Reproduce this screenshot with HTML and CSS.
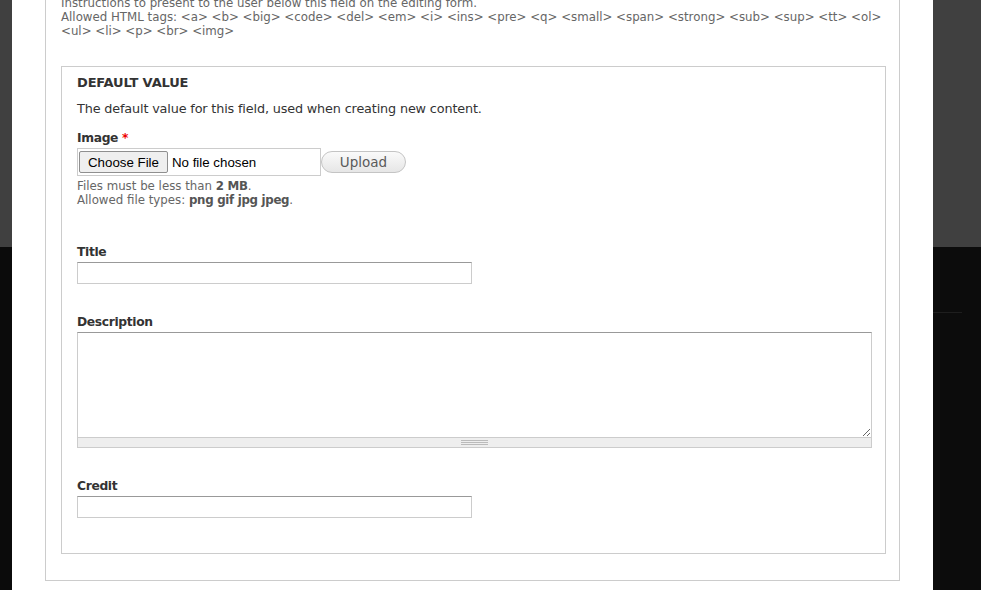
FILE: index.html
```html
<!DOCTYPE html>
<html lang="en">
<head>
<meta charset="utf-8">
<title>Default value</title>
<link rel="stylesheet" href="styles.css">
</head>
<body>
<div class="page">
  <div class="strip strip-left"></div>
  <main class="main">
    <div class="outer">
      <div class="desc desc-top">Instructions to present to the user below this field on the editing form.<br>Allowed HTML tags: &lt;a&gt; &lt;b&gt; &lt;big&gt; &lt;code&gt; &lt;del&gt; &lt;em&gt; &lt;i&gt; &lt;ins&gt; &lt;pre&gt; &lt;q&gt; &lt;small&gt; &lt;span&gt; &lt;strong&gt; &lt;sub&gt; &lt;sup&gt; &lt;tt&gt; &lt;ol&gt;<br>&lt;ul&gt; &lt;li&gt; &lt;p&gt; &lt;br&gt; &lt;img&gt;</div>
      <section class="inner">
        <div class="legend">DEFAULT VALUE</div>
        <p class="intro">The default value for this field, used when creating new content.</p>

        <div class="item item-image">
          <label class="label">Image <span class="req">*</span></label>
          <div class="file-row">
            <input class="file" type="file">
            <button class="upload" type="button">Upload</button>
          </div>
          <div class="desc">Files must be less than <strong>2 MB</strong>.<br>Allowed file types: <strong>png gif jpg jpeg</strong>.</div>
        </div>

        <div class="item item-title">
          <label class="label">Title</label>
          <input class="text" type="text">
        </div>

        <div class="item item-desc">
          <label class="label">Description</label>
          <textarea class="area"></textarea>
          <div class="grippie"><span class="grip"></span></div>
        </div>

        <div class="item item-credit">
          <label class="label">Credit</label>
          <input class="text" type="text">
        </div>
      </section>
    </div>
  </main>
  <div class="strip strip-right">
    <div class="strip-top"></div>
    <div class="strip-bottom"><span class="strip-line"></span></div>
  </div>
</div>
</body>
</html>
```
FILE: styles.css
```css
html, body {
  margin: 0;
  padding: 0;
  height: 100%;
  overflow: hidden;
}
body {
  font-family: "DejaVu Sans", Verdana, sans-serif;
  color: #333;
  background: #0b0b0b;
}
.page {
  display: flex;
  height: 590px;
}
.strip {
  flex: none;
}
.strip-left {
  width: 12px;
  background: linear-gradient(to bottom, #404040 0, #404040 247px, #0b0b0b 247px);
}
.strip-right {
  width: 48px;
  display: flex;
  flex-direction: column;
}
.strip-top {
  height: 247px;
  background: #404040;
}
.strip-bottom {
  flex: 1;
  background: #0c0c0c;
  padding-top: 65px;
}
.strip-line {
  display: block;
  width: 29px;
  height: 1px;
  background: #1e1e1e;
}
.main {
  width: 921px;
  background: #fff;
  padding-left: 33px;
  box-sizing: border-box;
}
.outer {
  width: 855px;
  box-sizing: border-box;
  border: 1px solid #ccc;
  border-top: none;
  padding: 0 15px 26px 15px;
}
.desc {
  font-size: 11.8px;
  line-height: 14px;
  color: #666;
}
.desc strong {
  color: #555;
  letter-spacing: -0.3px;
}
.desc-top {
  margin-top: -4px;
}
.inner {
  margin-top: 28px;
  width: 825px;
  box-sizing: border-box;
  border: 1px solid #ccc;
  padding: 8px 15px 35px 15px;
}
.legend {
  font-size: 13px;
  line-height: 16px;
  font-weight: bold;
  letter-spacing: -0.15px;
  text-transform: uppercase;
}
.intro {
  margin: 10px 0 0;
  font-size: 12.8px;
  letter-spacing: -0.15px;
  line-height: 16px;
}
.label {
  display: block;
  font-size: 12.3px;
  letter-spacing: -0.35px;
  line-height: 16px;
  font-weight: bold;
  padding-top: 1px;
  margin-bottom: 2px;
}
.req {
  color: #e00;
}
.item-image { margin-top: 12px; }
.item-title { margin-top: 36px; }
.item-desc { margin-top: 29px; }
.item-credit { margin-top: 29px; }
.file-row {
  display: flex;
  align-items: center;
}
.file {
  box-sizing: border-box;
  width: 244px;
  height: 28px;
  border: 1px solid #ccc;
  padding: 2px 1px;
  margin: 0;
  font-family: "Liberation Sans", Arial, sans-serif;
  font-size: 13.3px;
  color: #000;
  background: #fff;
}
.file::file-selector-button {
  font-family: "Liberation Sans", Arial, sans-serif;
  font-size: 13.3px;
  height: 22px;
  padding: 0 8px;
  margin-right: 4px;
  border: 1px solid #8f8f8f;
  border-radius: 2px;
  background: #efefef;
  color: #000;
}
.upload {
  box-sizing: border-box;
  width: 85px;
  height: 22px;
  margin: 0;
  padding: 0;
  border: 1px solid #c4c4c4;
  border-radius: 11px;
  background: linear-gradient(to bottom, #fafafa, #e6e6e6);
  font-family: "DejaVu Sans", Verdana, sans-serif;
  font-size: 13.5px;
  color: #5a5a5a;
}
.item-image .desc {
  margin-top: 3px;
}
.text {
  display: block;
  box-sizing: border-box;
  width: 395px;
  height: 22px;
  margin: 0;
  border: 1px solid #ccc;
  border-top-color: #999;
  padding: 2px;
  font-family: "DejaVu Sans", Verdana, sans-serif;
  font-size: 13px;
}
.area {
  display: block;
  box-sizing: border-box;
  width: 795px;
  height: 106px;
  margin: 0;
  border: 1px solid #ccc;
  border-top-color: #999;
  padding: 2px;
  font-family: "DejaVu Sans", Verdana, sans-serif;
  font-size: 13px;
}
.grippie {
  box-sizing: border-box;
  width: 795px;
  height: 10px;
  background: #eee;
  border: 1px solid #ccc;
  border-top: none;
  display: flex;
  justify-content: center;
  padding-top: 2px;
}
.grip {
  display: block;
  width: 27px;
  height: 5px;
  background: repeating-linear-gradient(to bottom, #bbb 0, #bbb 1px, transparent 1px, transparent 2px);
}
```
